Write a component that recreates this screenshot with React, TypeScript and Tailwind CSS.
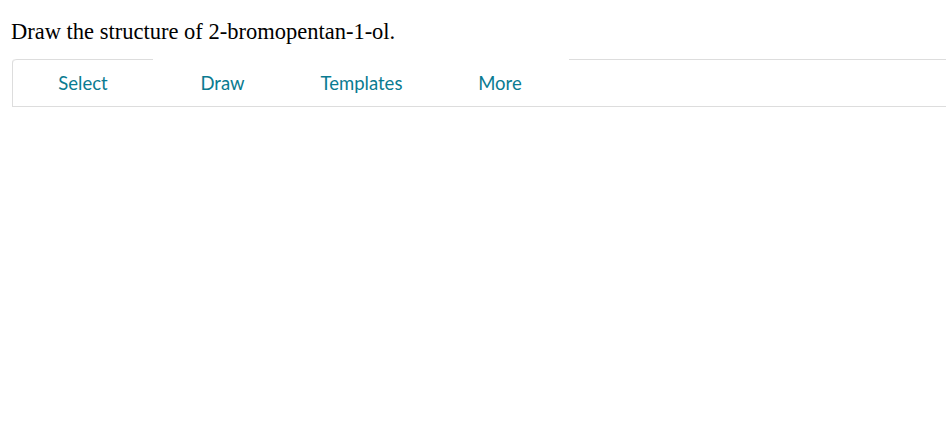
export default function App() {
  const tabs = [
    { label: 'Draw', w: 'w-[139px]' },
    { label: 'Templates', w: 'w-[139px]' },
    { label: 'More', w: 'w-[138px]' },
  ];
  return (
    <div className="min-h-screen bg-white">
      <p
        className="px-[11px] pt-[18px] text-[22.5px] leading-[27px] text-black"
        style={{ fontFamily: '"Liberation Serif", serif' }}
      >
        Draw the structure of 2-bromopentan-1-ol.
      </p>
      <div
        className="ml-3 mt-[14px] flex h-[48px] rounded-tl border-b border-l border-[#dddddd]"
        style={{ fontFamily: 'Lato, sans-serif' }}
      >
        <button className="flex w-[140px] items-center justify-center rounded-tl border-t border-[#dddddd] pt-[2px] text-[18.5px] text-[#0a7b91]">
          Select
        </button>
        {tabs.map((t) => (
          <button
            key={t.label}
            className={`flex ${t.w} items-center justify-center border-t border-transparent pt-[2px] text-[18.5px] text-[#0a7b91]`}
          >
            {t.label}
          </button>
        ))}
        <div className="flex-1 border-t border-[#dddddd]" />
      </div>
    </div>
  );
}
